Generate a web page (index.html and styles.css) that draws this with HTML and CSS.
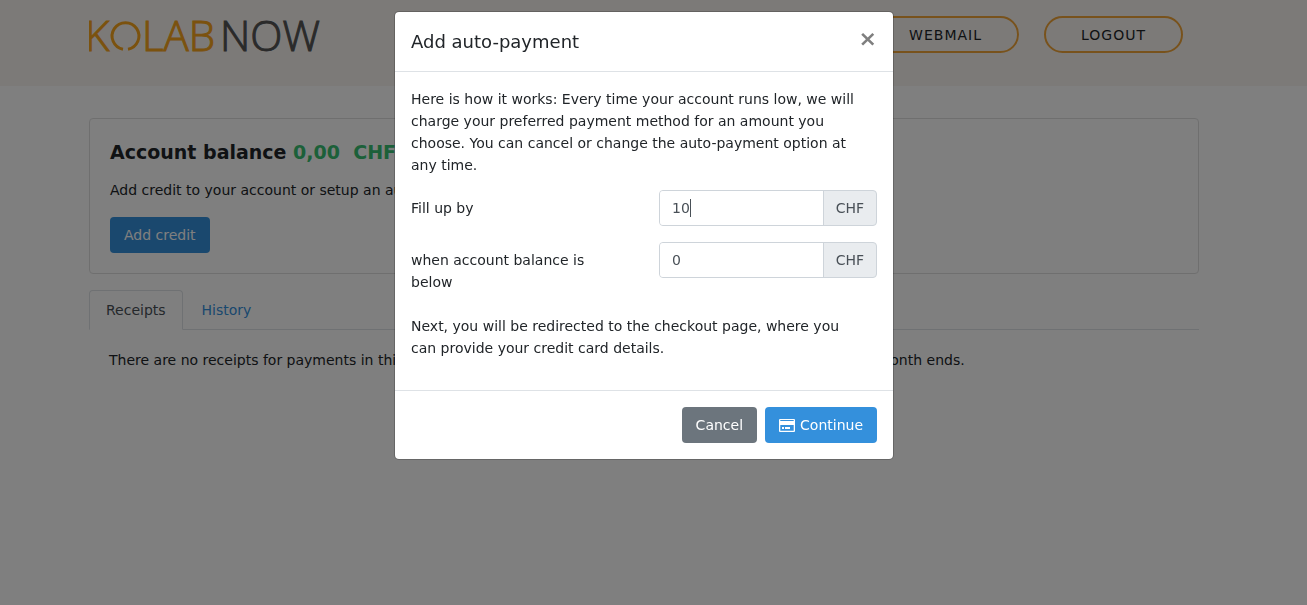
FILE: index.html
```html
<!DOCTYPE html>
<html lang="en">
<head>
<meta charset="utf-8">
<meta name="viewport" content="width=device-width, initial-scale=1">
<title>Kolab Now</title>
<link rel="stylesheet" href="styles.css">
</head>
<body>
<header class="header">
  <div class="container header-row">
    <a class="logo" href="#" aria-label="Kolab Now">
      <svg width="240" height="48" viewBox="0 0 240 48">
        <g class="logo-kolab">
          <text x="-4" y="35">K</text>
          <path class="logo-ring" d="M39 33.2A13.4 13.4 0 1 0 34 33.2"/>
          <text x="53" y="35">LAB</text>
        </g>
        <text class="logo-now" x="131" y="35">NOW</text>
      </svg>
    </a>
    <nav class="nav">
      <a class="nav-link" href="#">WEBMAIL</a>
      <a class="nav-link" href="#">LOGOUT</a>
    </nav>
  </div>
</header>
<main class="container">
  <section class="card">
    <h1 class="card-title">Account balance <span class="amount">0,00&nbsp; CHF</span></h1>
    <p class="card-text">Add credit to your account or setup an auto-payment by using the button below.</p>
    <button class="btn btn-primary" type="button">Add credit</button>
  </section>
  <nav class="tabs">
    <a class="tab tab-active" href="#receipts">Receipts</a>
    <a class="tab" href="#history">History</a>
  </nav>
  <p class="tab-content" id="receipts"><span>There are no receipts for payments in this account.</span><span>Please, note that you can download receipts after the month ends.</span></p>
</main>
<div class="backdrop">
  <form class="modal" role="dialog" aria-labelledby="modal-title">
    <div class="modal-header">
      <h2 class="modal-title" id="modal-title">Add auto-payment</h2>
      <button class="close" type="button" aria-label="Close">×</button>
    </div>
    <div class="modal-body">
      <p class="modal-text">Here is how it works: Every time your account runs low, we will charge your preferred payment method for an amount you choose. You can cancel or change the auto-payment option at any time.</p>
      <div class="fields">
        <div class="field">
          <label class="label" for="amount">Fill up by</label>
          <div class="input-group">
            <input class="input" id="amount" type="text" value="10">
            <span class="caret"></span>
            <span class="unit">CHF</span>
          </div>
        </div>
        <div class="field">
          <label class="label" for="balance">when account balance is below</label>
          <div class="input-group">
            <input class="input" id="balance" type="text" value="0">
            <span class="unit">CHF</span>
          </div>
        </div>
      </div>
      <p class="modal-text">Next, you will be redirected to the checkout page, where you can provide your credit card details.</p>
    </div>
    <div class="modal-footer">
      <button class="btn btn-secondary" type="button">Cancel</button>
      <button class="btn btn-primary" type="submit">
        <svg class="card-icon" width="16" height="13" viewBox="0 0 16 13" fill="currentColor" aria-hidden="true">
          <path fill-rule="evenodd" d="M1 0H15Q16 0 16 1V12Q16 13 15 13H1Q0 13 0 12V1Q0 0 1 0ZM1.3 1V2H14.7V1ZM1.3 6V11.7H14.7V6Z"/>
          <path d="M3 8H5V10H3ZM6 8H11V10H6Z"/>
        </svg>
        Continue
      </button>
    </div>
  </form>
</div>
</body>
</html>
```
FILE: styles.css
```css
* { box-sizing: border-box; }
:root { --gutter: 19px; }
body {
  margin: 0;
  background: #fff;
  color: #212529;
  font: 14px/22px "DejaVu Sans", sans-serif;
}
h1, h2, p { margin: 0; }
a { text-decoration: none; color: #3490dc; }
button, input { font: inherit; }

.header { background: #f9f5f1; padding-right: var(--gutter); }
main { padding-right: var(--gutter); }
.container { max-width: 1110px; margin: 0 auto; }
main.container { max-width: 1129px; }
.header-row { display: flex; align-items: flex-start; justify-content: space-between; height: 86px; padding: 16px 16px 0 0; }
.logo { display: flex; }
.logo text { font: 300 42px "Open Sans", sans-serif; stroke-width: 1; }
.logo-kolab { fill: #f7a41c; stroke: #f7a41c; }
.logo-ring { fill: none; stroke-width: 3; }
.logo-now { fill: #545454; stroke: #545454; }
.nav { display: flex; gap: 25px; }
.nav-link {
  display: flex;
  align-items: center;
  height: 37px;
  padding: 0 35px;
  border: 2px solid #f1a539;
  border-radius: 19px;
  color: #212529;
  letter-spacing: 1px;
}

.card { margin-top: 32px; padding: 20px; border: 1px solid #dfdfdf; border-radius: 4px; }
.card-title { margin-bottom: 13px; font-size: 19px; line-height: 27px; }
.amount { color: #38c172; }
.card-text { margin-bottom: 16px; }
.btn { display: inline-flex; align-items: center; gap: 5px; height: 36px; padding: 0 14px; border: 0; border-radius: 4px; color: #fff; }
.btn-primary { background: #3490dc; }
.btn-secondary { background: #6c757d; }
.tabs { display: flex; gap: 2px; margin-top: 16px; border-bottom: 1px solid #dee2e6; }
.tab { margin-bottom: -1px; padding: 8px 16px; border: 1px solid transparent; border-radius: 4px 4px 0 0; }
.tab-active { border-color: #dee2e6 #dee2e6 #fff; background: #fff; color: #495057; }
.tab-content { display: flex; gap: 28px; padding: 19px 20px; }

.backdrop {
  position: fixed;
  inset: 0;
  display: flex;
  align-items: flex-start;
  justify-content: center;
  padding: 11px var(--gutter) 0 0;
  background: rgba(0, 0, 0, 0.5);
}
.modal { width: 100%; max-width: 500px; border: 1px solid rgba(0, 0, 0, 0.2); border-radius: 5px; background: #fff; background-clip: padding-box; }
.modal-header { display: flex; align-items: flex-start; justify-content: space-between; padding: 16px; border-bottom: 1px solid #dee2e6; }
.modal-title { font-size: 18px; font-weight: 400; line-height: 27px; }
.close { padding: 0; border: 0; background: none; color: #7f7f7f; font-size: 22px; font-weight: 700; line-height: 22px; }
.modal-body { padding: 16px 16px 31px; }
.modal-text { padding-right: 16px; }
.fields { display: grid; gap: 16px; margin: 14px 0 15px; }
.field { display: grid; grid-template-columns: minmax(0, 1fr) minmax(0, 1fr); align-items: start; gap: 30px; }
.label { padding: 7px 16px 7px 0; }
.input-group { position: relative; display: flex; height: 36px; border: 1px solid #ced4da; border-radius: 4px; background: #e9ecef; color: #495057; }
.input { flex: 1; min-width: 0; padding: 0 12px; border: 0; border-right: 1px solid #ced4da; border-radius: 3px 0 0 3px; background: #fff; color: inherit; outline: 0; }
.caret { position: absolute; left: 30px; top: 8px; width: 1px; height: 18px; background: #495057; }
.unit { display: flex; align-items: center; padding: 0 12px; }
.modal-footer { display: flex; justify-content: flex-end; gap: 8px; padding: 16px; border-top: 1px solid #dee2e6; }
```
